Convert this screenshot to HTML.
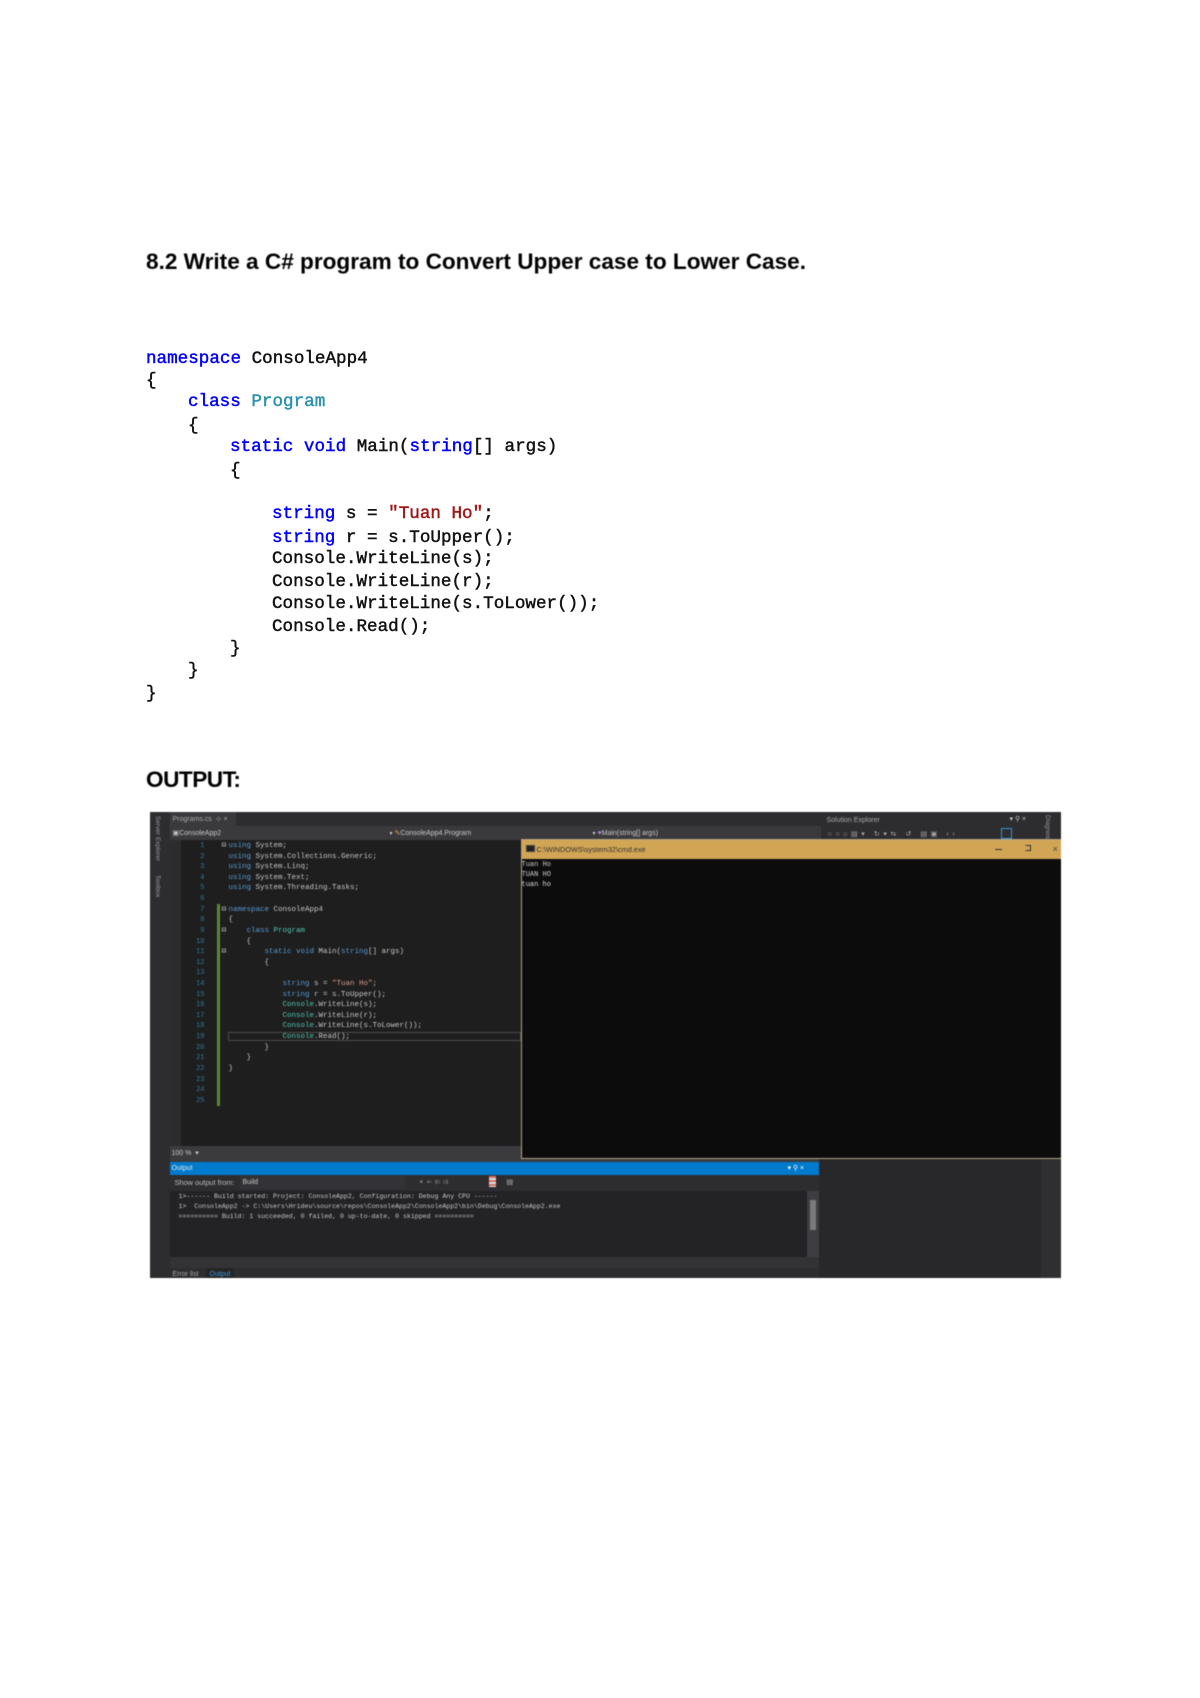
<!DOCTYPE html>
<html><head><meta charset="utf-8"><style>
html,body{margin:0;padding:0;background:#fff}
#p{position:relative;width:1200px;height:1698px;overflow:hidden;background:#fff}
.h{position:absolute;left:146px;font:bold 22.6px/28px "Liberation Sans",sans-serif;color:#000;white-space:pre;filter:blur(.4px)}
.c{position:absolute;font:17.6px/22px "Liberation Mono",monospace;color:#111;white-space:pre;filter:blur(.35px);-webkit-text-stroke:.45px currentColor}
.k{color:#0000ff}.t{color:#2b91af}.s{color:#a31515}
#w{position:absolute;left:149.5px;top:812px;width:911px;height:466px;background:#2d2d30;overflow:hidden;filter:blur(.65px)}
#w div{position:absolute;white-space:pre}
#w .m{font:7.5px/10px "Liberation Mono",monospace;color:#c8c8c8;margin-top:1px}
#w .n{font:7px/10px "Liberation Mono",monospace;color:#2b7a9c;width:16px;text-align:right;left:39px;margin-top:1px}
#w .u{font:7px/10px "Liberation Sans",sans-serif;color:#c8c8c8}
#w b{font-weight:normal;color:#569cd6}#w i{font-style:normal;color:#4ec9b0}#w em{font-style:normal;color:#d69d85}
</style></head><body><div id="p">
<div class="h" style="top:248px">8.2 Write a C# program to Convert Upper case to Lower Case.</div>
<div class="c" style="left:146px;top:348px"><span class="k">namespace</span> ConsoleApp4</div>
<div class="c" style="left:146px;top:370px">{</div>
<div class="c" style="left:188px;top:391px"><span class="k">class</span> <span class="t">Program</span></div>
<div class="c" style="left:188px;top:415px">{</div>
<div class="c" style="left:230px;top:436px"><span class="k">static void</span> Main(<span class="k">string</span>[] args)</div>
<div class="c" style="left:230px;top:460px">{</div>
<div class="c" style="left:272px;top:503px"><span class="k">string</span> s = <span class="s">"Tuan Ho"</span>;</div>
<div class="c" style="left:272px;top:527px"><span class="k">string</span> r = s.ToUpper();</div>
<div class="c" style="left:272px;top:548px">Console.WriteLine(s);</div>
<div class="c" style="left:272px;top:571px">Console.WriteLine(r);</div>
<div class="c" style="left:272px;top:593px">Console.WriteLine(s.ToLower());</div>
<div class="c" style="left:272px;top:616px">Console.Read();</div>
<div class="c" style="left:230px;top:638px">}</div>
<div class="c" style="left:188px;top:660px">}</div>
<div class="c" style="left:146px;top:683px">}</div>
<div class="h" style="top:766px;letter-spacing:-.5px">OUTPUT:</div>

<div id="w">
<div style="left:0;top:0;width:20px;height:466px;background:#2d2d30"></div>
<div style="left:20px;top:0;width:800px;height:14px;background:#2d2d30"></div>
<div style="left:20px;top:0;width:66px;height:14px;background:#3a3a3d"></div>
<div style="left:20px;top:14px;width:800px;height:14px;background:#3a3a3d"></div>
<div style="left:21px;top:28px;width:10px;height:306px;background:#2c2c2e"></div>
<div style="left:31px;top:28px;width:340px;height:306px;background:#1e1e1e"></div>
<div style="left:20px;top:334px;width:800px;height:16px;background:#3b3b3e"></div>
<div style="left:20px;top:350px;width:649px;height:13px;background:#007acc"></div>
<div style="left:20px;top:363px;width:649px;height:16px;background:#2d2d30"></div>
<div style="left:20px;top:379px;width:637px;height:66px;background:#232325"></div>
<div style="left:657px;top:379px;width:12px;height:66px;background:#3e3e42"></div>
<div style="left:660px;top:388px;width:6px;height:30px;background:#7a7a7d"></div>
<div style="left:20px;top:445px;width:649px;height:11px;background:#333336"></div>
<div style="left:20px;top:456px;width:649px;height:10px;background:#2d2d30"></div>
<div style="left:669px;top:334px;width:242px;height:132px;background:#28282b"></div>
<div style="left:891px;top:334px;width:20px;height:132px;background:#2f2f32"></div>
<div style="left:671px;top:0;width:240px;height:28px;background:#2d2d30"></div>

<div class="u" style="left:23px;top:3px;color:#aaa">Programs.cs &nbsp;⊹ ×</div>
<div class="u" style="left:23px;top:17px">▣ConsoleApp2</div>
<div class="u" style="left:240px;top:17px"><span style="color:#ccc;font-size:6px">▾</span> <span style="color:#d8a657">✎</span>ConsoleApp4.Program</div>
<div class="u" style="left:443px;top:17px"><span style="color:#ccc;font-size:6px">▾</span> <span style="color:#b180d7">♥</span>Main(string[] args)</div>
<div class="u" style="left:677px;top:4px;color:#aaa">Solution Explorer</div>
<div class="u" style="left:860px;top:3px">▾ ⚲ ×</div>
<div class="u" style="left:678px;top:18px;color:#aaa;letter-spacing:3.6px">○○⌂▤▾ ↻▾⇆ ↺ ▤▣ ‹›</div>
<div style="left:851px;top:16px;width:11px;height:11px;border:1px solid #3794d6;box-sizing:border-box"></div>
<div class="u" style="left:12px;top:4px;transform:rotate(90deg);transform-origin:0 0;color:#999;font-size:6.5px">Server Explorer</div>
<div class="u" style="left:12px;top:63px;transform:rotate(90deg);transform-origin:0 0;color:#999;font-size:6.5px">Toolbox</div>
<div class="u" style="left:902px;top:3px;transform:rotate(90deg);transform-origin:0 0;color:#999;font-size:6.5px">Diagnostic</div>

<div style="left:67px;top:92px;width:3px;height:202px;background:#5a8a32"></div>
<div class="n" style="top:28px">1</div><div class="n" style="top:39px">2</div><div class="n" style="top:49px">3</div><div class="n" style="top:60px">4</div><div class="n" style="top:70px">5</div><div class="n" style="top:81px">6</div><div class="n" style="top:92px">7</div><div class="n" style="top:102px">8</div><div class="n" style="top:113px">9</div><div class="n" style="top:124px">10</div><div class="n" style="top:134px">11</div><div class="n" style="top:145px">12</div><div class="n" style="top:155px">13</div><div class="n" style="top:166px">14</div><div class="n" style="top:177px">15</div><div class="n" style="top:187px">16</div><div class="n" style="top:198px">17</div><div class="n" style="top:208px">18</div><div class="n" style="top:219px">19</div><div class="n" style="top:230px">20</div><div class="n" style="top:240px">21</div><div class="n" style="top:251px">22</div><div class="n" style="top:262px">23</div><div class="n" style="top:272px">24</div><div class="n" style="top:283px">25</div>

<div class="m" style="left:72px;top:28px">⊟</div><div class="m" style="left:72px;top:92px">⊟</div><div class="m" style="left:72px;top:113px">⊟</div><div class="m" style="left:72px;top:134px">⊟</div>
<div class="m" style="left:79px;top:28px"><b>using</b> System;</div>
<div class="m" style="left:79px;top:39px"><b>using</b> System.Collections.Generic;</div>
<div class="m" style="left:79px;top:49px"><b>using</b> System.Linq;</div>
<div class="m" style="left:79px;top:60px"><b>using</b> System.Text;</div>
<div class="m" style="left:79px;top:70px"><b>using</b> System.Threading.Tasks;</div>
<div class="m" style="left:79px;top:92px"><b>namespace</b> ConsoleApp4</div>
<div class="m" style="left:79px;top:102px">{</div>
<div class="m" style="left:97px;top:113px"><b>class</b> <i>Program</i></div>
<div class="m" style="left:97px;top:124px">{</div>
<div class="m" style="left:115px;top:134px"><b>static void</b> Main(<b>string</b>[] args)</div>
<div class="m" style="left:115px;top:145px">{</div>
<div class="m" style="left:133px;top:166px"><b>string</b> s = <em>"Tuan Ho"</em>;</div>
<div class="m" style="left:133px;top:177px"><b>string</b> r = s.ToUpper();</div>
<div class="m" style="left:133px;top:187px"><i>Console</i>.WriteLine(s);</div>
<div class="m" style="left:133px;top:198px"><i>Console</i>.WriteLine(r);</div>
<div class="m" style="left:133px;top:208px"><i>Console</i>.WriteLine(s.ToLower());</div>
<div style="left:78px;top:220px;width:293px;height:9px;border:1px solid #4a4a4a;box-sizing:border-box"></div>
<div class="m" style="left:133px;top:219px"><i>Console</i>.Read();</div>
<div class="m" style="left:115px;top:230px">}</div>
<div class="m" style="left:97px;top:240px">}</div>
<div class="m" style="left:79px;top:251px">}</div>

<div class="u" style="left:22px;top:337px">100 % &nbsp;▾</div>
<div class="u" style="left:22px;top:352px;color:#e6e6e6">Output</div>
<div class="u" style="left:638px;top:352px;color:#fff">▾ ⚲ ×</div>
<div class="u" style="left:25px;top:366px;color:#bbb;font-size:7.4px">Show output from:</div>
<div style="left:90px;top:364px;width:165px;height:13px;background:#333337"></div>
<div class="u" style="left:93px;top:366px">Build</div>
<div class="u" style="left:270px;top:366px;color:#777">▾ &nbsp;⇤ ⇇ ⇉</div>
<div style="left:339px;top:364px;width:7px;height:11px;background:repeating-linear-gradient(#d9705f 0 2px,#ddd 2px 4px)"></div>
<div class="u" style="left:357px;top:366px;color:#bbb">▤</div>
<div class="m" style="left:29px;top:379px;font-size:6.57px">1&gt;------ Build started: Project: ConsoleApp2, Configuration: Debug Any CPU ------</div>
<div class="m" style="left:29px;top:389px;font-size:6.57px">1&gt;  ConsoleApp2 -&gt; C:\Users\Hrideu\source\repos\ConsoleApp2\ConsoleApp2\bin\Debug\ConsoleApp2.exe</div>
<div class="m" style="left:29px;top:399px;font-size:6.57px">========== Build: 1 succeeded, 0 failed, 0 up-to-date, 0 skipped ==========</div>
<div class="u" style="left:23px;top:458px;color:#aaa">Error list</div>
<div style="left:56px;top:456px;width:28px;height:10px;background:#252526"></div>
<div class="u" style="left:60px;top:458px;color:#3a96dd">Output</div>

<div style="left:371px;top:27px;width:540px;height:320px;background:#0c0c0c;border:1px solid #b5a583;border-right:0;box-sizing:border-box"></div>
<div style="left:372px;top:28px;width:539px;height:19px;background:#d2a554"></div>
<div style="left:376px;top:33px;width:9px;height:7px;background:#222;border:1px solid #444;box-sizing:border-box"></div>
<div class="u" style="left:387px;top:33px;color:#333;font-size:7.3px">C:\WINDOWS\system32\cmd.exe</div>
<div style="left:845px;top:37px;width:7px;height:1px;background:#333"></div>
<div style="left:875px;top:33px;width:6px;height:6px;border:1px solid #333;border-left-color:transparent;box-sizing:border-box"></div>
<div class="u" style="left:903px;top:32px;color:#444;font-size:9px">×</div>
<div class="m" style="left:372px;top:47px;color:#ccc;font-size:7px">Tuan Ho</div>
<div class="m" style="left:372px;top:57px;color:#ccc;font-size:7px">TUAN HO</div>
<div class="m" style="left:372px;top:67px;color:#ddd;font-size:7px">tuan ho</div>
</div>
</div></body></html>
